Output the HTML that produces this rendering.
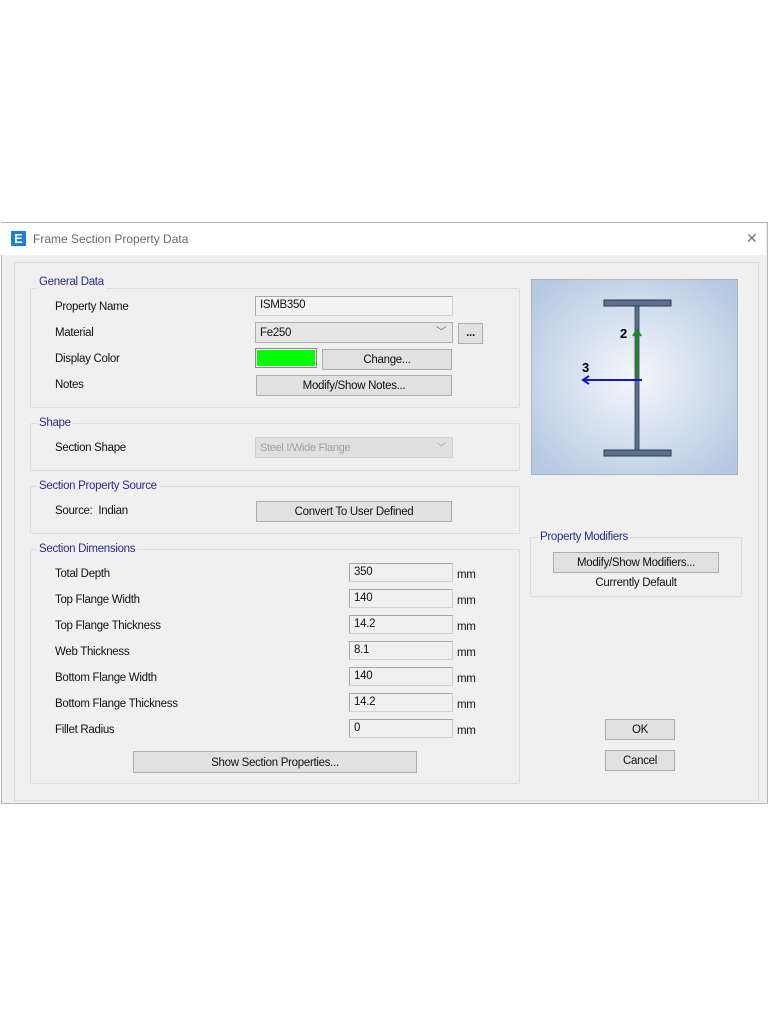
<!DOCTYPE html>
<html><head><meta charset="utf-8"><style>
*{box-sizing:border-box;margin:0;padding:0}
body{width:768px;height:1024px;background:#fff;position:relative;font-family:"Liberation Sans",sans-serif;font-size:11.5px;color:#111;letter-spacing:-0.3px;overflow:hidden}
.a{position:absolute}
.win{left:1px;top:222px;width:767px;height:582px;border:1px solid #b5b5b5;background:#f0f0f0}
.title{left:1px;top:223px;width:765px;height:32px;background:#fff}
.panel{border:1px solid #dcdcdc}
.grp{border:1px solid #dcdcdc;border-radius:2px}
.gt{color:#2b2b8f;background:#f0f0f0;padding:0 2px;line-height:13px}
.lbl{line-height:14px}
.tb{background:#f0f0f0;border:1px solid #d0d0d0;border-top-color:#a8a8a8;border-left-color:#a8a8a8;padding-left:4px;line-height:16px}
.btn{background:#e1e1e1;border:1px solid #adadad;text-align:center}
.mm{line-height:14px}
</style></head><body>
<div class="a win"></div>
<div class="a title"></div>
<div class="a" style="left:11px;top:231px;width:15px;height:15px;background:#1b7ed8;color:#fff;font-weight:bold;font-size:13px;line-height:15px;text-align:center;letter-spacing:0">E</div>
<div class="a" style="left:33px;top:232px;color:#6a6a6a;font-size:12px;letter-spacing:0">Frame Section Property Data</div>
<div class="a" style="left:746px;top:230px;color:#777;font-size:14px">✕</div>
<div class="a panel" style="left:14px;top:262px;width:745px;height:539px"></div>

<div class="a grp" style="left:30px;top:288px;width:490px;height:120px"></div>
<div class="a gt" style="left:37px;top:276px">General Data</div>
<div class="a lbl" style="left:55px;top:300px">Property Name</div>
<div class="a tb" style="left:255px;top:296px;width:198px;height:20px;background:#f4f4f4">ISMB350</div>
<div class="a lbl" style="left:55px;top:326px">Material</div>
<div class="a tb" style="left:255px;top:322px;width:198px;height:21px;background:#e6e6e6;border-color:#adadad;line-height:20px">Fe250<span style="position:absolute;right:6px;color:#666;font-size:10px">﹀</span></div>
<div class="a btn" style="left:458px;top:323px;width:25px;height:21px;line-height:19px;font-weight:bold">...</div>
<div class="a lbl" style="left:55px;top:352px">Display Color</div>
<div class="a" style="left:255px;top:348px;width:62px;height:20px;border:1px solid #888;background:#00ff00;box-shadow:inset 0 0 0 1px #fff"></div>
<div class="a btn" style="left:322px;top:349px;width:130px;height:21px;line-height:21px">Change...</div>
<div class="a lbl" style="left:55px;top:378px">Notes</div>
<div class="a btn" style="left:256px;top:375px;width:196px;height:21px;line-height:21px">Modify/Show Notes...</div>

<div class="a grp" style="left:30px;top:423px;width:490px;height:48px"></div>
<div class="a gt" style="left:37px;top:417px">Shape</div>
<div class="a lbl" style="left:55px;top:441px">Section Shape</div>
<div class="a tb" style="left:255px;top:437px;width:198px;height:21px;background:#e0e0e0;border-color:#d0d0d0;color:#a0a0a0;line-height:21px;font-size:11px">Steel I/Wide Flange<span style="position:absolute;right:6px;font-size:10px">﹀</span></div>

<div class="a grp" style="left:30px;top:486px;width:490px;height:48px"></div>
<div class="a gt" style="left:37px;top:480px">Section Property Source</div>
<div class="a lbl" style="left:55px;top:504px">Source:&nbsp; Indian</div>
<div class="a btn" style="left:256px;top:501px;width:196px;height:21px;line-height:21px">Convert To User Defined</div>

<div class="a grp" style="left:30px;top:549px;width:490px;height:235px"></div>
<div class="a gt" style="left:37px;top:543px">Section Dimensions</div>
<div class="a lbl" style="left:55px;top:567px">Total Depth</div>
<div class="a lbl" style="left:55px;top:593px">Top Flange Width</div>
<div class="a lbl" style="left:55px;top:619px">Top Flange Thickness</div>
<div class="a lbl" style="left:55px;top:645px">Web Thickness</div>
<div class="a lbl" style="left:55px;top:671px">Bottom Flange Width</div>
<div class="a lbl" style="left:55px;top:697px">Bottom Flange Thickness</div>
<div class="a lbl" style="left:55px;top:723px">Fillet Radius</div>
<div class="a tb" style="left:349px;top:563px;width:104px;height:19px">350</div>
<div class="a tb" style="left:349px;top:589px;width:104px;height:19px">140</div>
<div class="a tb" style="left:349px;top:615px;width:104px;height:19px">14.2</div>
<div class="a tb" style="left:349px;top:641px;width:104px;height:19px">8.1</div>
<div class="a tb" style="left:349px;top:667px;width:104px;height:19px">140</div>
<div class="a tb" style="left:349px;top:693px;width:104px;height:19px">14.2</div>
<div class="a tb" style="left:349px;top:719px;width:104px;height:19px">0</div>
<div class="a mm" style="left:457px;top:568px">mm</div>
<div class="a mm" style="left:457px;top:594px">mm</div>
<div class="a mm" style="left:457px;top:620px">mm</div>
<div class="a mm" style="left:457px;top:646px">mm</div>
<div class="a mm" style="left:457px;top:672px">mm</div>
<div class="a mm" style="left:457px;top:698px">mm</div>
<div class="a mm" style="left:457px;top:724px">mm</div>
<div class="a btn" style="left:133px;top:751px;width:284px;height:22px;line-height:22px">Show Section Properties...</div>

<svg class="a" style="left:531px;top:279px" width="207" height="196" viewBox="0 0 207 196">
<defs><radialGradient id="g" cx="50%" cy="50%" r="65%"><stop offset="0" stop-color="#f4f7fb"/><stop offset="1" stop-color="#b4c8e2"/></radialGradient></defs>
<rect x="0" y="0" width="207" height="196" fill="url(#g)" stroke="#999"/>
<rect x="73" y="21" width="67" height="6" fill="#5a7290" stroke="#2c3a4c"/>
<rect x="73" y="171" width="67" height="6" fill="#5a7290" stroke="#2c3a4c"/>
<rect x="104" y="27" width="4" height="144" fill="#5a7290" stroke="#2c3a4c" stroke-width="0.8"/>
<line x1="106" y1="101" x2="106" y2="52" stroke="#1a8a1a" stroke-width="2"/>
<path d="M102 57 L106 51 L110 57" fill="none" stroke="#1a8a1a" stroke-width="2"/>
<line x1="111" y1="101" x2="52" y2="101" stroke="#1515d0" stroke-width="2"/>
<path d="M58 97 L52 101 L58 105" fill="none" stroke="#1515d0" stroke-width="2"/>
<text x="89" y="59" font-family="Liberation Sans" font-weight="bold" font-size="13">2</text>
<text x="51" y="93" font-family="Liberation Sans" font-weight="bold" font-size="13">3</text>
</svg>

<div class="a grp" style="left:530px;top:537px;width:212px;height:60px"></div>
<div class="a gt" style="left:538px;top:531px">Property Modifiers</div>
<div class="a btn" style="left:553px;top:552px;width:166px;height:21px;line-height:21px">Modify/Show Modifiers...</div>
<div class="a" style="left:530px;top:577px;width:212px;text-align:center">Currently Default</div>

<div class="a btn" style="left:605px;top:719px;width:70px;height:21px;line-height:21px">OK</div>
<div class="a btn" style="left:605px;top:750px;width:70px;height:21px;line-height:21px">Cancel</div>
</body></html>
